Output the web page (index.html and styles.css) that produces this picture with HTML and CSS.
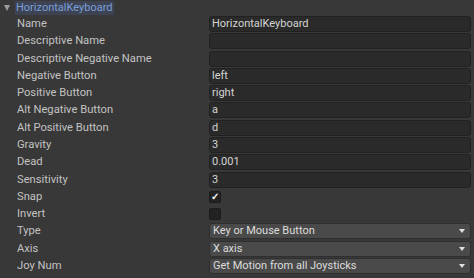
FILE: index.html
```html
<!DOCTYPE html>
<html lang="en">

<head>
    <meta charset="UTF-8">
    <meta name="viewport" content="width=device-width, initial-scale=1.0">
    <link rel="stylesheet" href="styles.css">
    <title>Input Axis</title>
</head>

<body>
    <div class="inspector">
        <div class="header">
            <span class="fold"></span>
            <span class="title">HorizontalKeyboard</span>
        </div>
        <div class="props">
            <label>Name</label>
            <div class="field">HorizontalKeyboard</div>
            <label>Descriptive Name</label>
            <div class="field"></div>
            <label>Descriptive Negative Name</label>
            <div class="field"></div>
            <label>Negative Button</label>
            <div class="field">left</div>
            <label>Positive Button</label>
            <div class="field">right</div>
            <label>Alt Negative Button</label>
            <div class="field">a</div>
            <label>Alt Positive Button</label>
            <div class="field">d</div>
            <label>Gravity</label>
            <div class="field">3</div>
            <label>Dead</label>
            <div class="field">0.001</div>
            <label>Sensitivity</label>
            <div class="field">3</div>
            <label>Snap</label>
            <div class="check-cell"><span class="check checked">&#10003;</span></div>
            <label>Invert</label>
            <div class="check-cell"><span class="check"></span></div>
            <label>Type</label>
            <div class="select">Key or Mouse Button<span class="arrow"></span></div>
            <label>Axis</label>
            <div class="select">X axis<span class="arrow"></span></div>
            <label>Joy Num</label>
            <div class="select">Get Motion from all Joysticks<span class="arrow"></span></div>
        </div>
    </div>
</body>

</html>
```

FILE: styles.css
```css
body {
    margin: 0;
    background-color: #383838;
    font-family: Roboto, "Noto Sans", sans-serif;
    font-size: 11px;
    color: #c2c2c2;
}

.inspector {
    width: 474px;
    height: 278px;
    overflow: hidden;
    box-sizing: border-box;
    padding-right: 3px;
}

.header {
    height: 16px;
    display: flex;
    align-items: center;
    padding-left: 4px;
}

.fold {
    width: 0;
    height: 0;
    border-left: 3.5px solid transparent;
    border-right: 3.5px solid transparent;
    border-top: 6px solid #9a9a9a;
    margin-right: 5px;
}

.title {
    color: #7b9fdc;
    background-color: #3d4352;
    padding: 0 1px;
    line-height: 14px;
}

.props {
    display: grid;
    grid-template-columns: 209px 1fr;
    grid-auto-rows: 16px;
    row-gap: 1.29px;
}

.props label {
    padding-left: 17px;
    font-size: 11.2px;
    line-height: 16px;
    white-space: nowrap;
}

.field {
    background-color: #2a2a2a;
    border: 1px solid #212121;
    border-radius: 3px;
    box-sizing: border-box;
    padding-left: 2px;
    line-height: 14px;
    color: #d4d4d4;
}

.check-cell {
    display: flex;
    align-items: center;
}

.check {
    width: 12px;
    height: 12px;
    box-sizing: border-box;
    background-color: #222;
    border: 1px solid #1b1b1b;
    border-radius: 2px;
    color: #f4f4f4;
    font-size: 10px;
    font-weight: bold;
    line-height: 10px;
    text-align: center;
}

.select {
    position: relative;
    background-color: #4a4a4a;
    border: 1px solid #2f2f2f;
    border-radius: 3px;
    box-sizing: border-box;
    padding-left: 3px;
    line-height: 14px;
    color: #dcdcdc;
}

.arrow {
    position: absolute;
    right: 5px;
    top: 5px;
    width: 0;
    height: 0;
    border-left: 3.5px solid transparent;
    border-right: 3.5px solid transparent;
    border-top: 4px solid #e0e0e0;
}
```
